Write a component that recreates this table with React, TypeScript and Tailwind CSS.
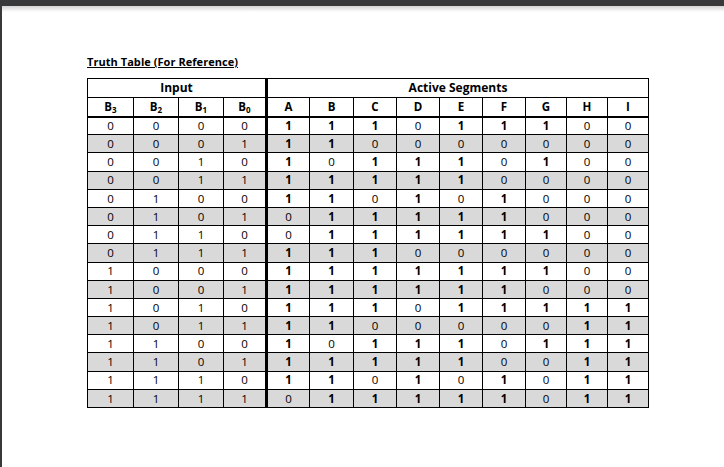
import React from "react";

const rows: number[][] = [
  [1, 1, 1, 0, 1, 1, 1, 0, 0],
  [1, 1, 0, 0, 0, 0, 0, 0, 0],
  [1, 0, 1, 1, 1, 0, 1, 0, 0],
  [1, 1, 1, 1, 1, 0, 0, 0, 0],
  [1, 1, 0, 1, 0, 1, 0, 0, 0],
  [0, 1, 1, 1, 1, 1, 0, 0, 0],
  [0, 1, 1, 1, 1, 1, 1, 0, 0],
  [1, 1, 1, 0, 0, 0, 0, 0, 0],
  [1, 1, 1, 1, 1, 1, 1, 0, 0],
  [1, 1, 1, 1, 1, 1, 0, 0, 0],
  [1, 1, 1, 0, 1, 1, 1, 1, 1],
  [1, 1, 0, 0, 0, 0, 0, 1, 1],
  [1, 0, 1, 1, 1, 0, 1, 1, 1],
  [1, 1, 1, 1, 1, 0, 0, 1, 1],
  [1, 1, 0, 1, 0, 1, 0, 1, 1],
  [0, 1, 1, 1, 1, 1, 0, 1, 1],
];

const segs = ["A", "B", "C", "D", "E", "F", "G", "H", "I"];
const inWidths = ["w-[46px]", "w-[45px]", "w-[45px]", "w-[43px]"];
const outWidths = ["w-[43px]", "w-[44px]", "w-[43px]", "w-[43px]", "w-[43px]", "w-[43px]", "w-[41px]", "w-[41px]", "w-[41px]"];

const bits = (n: number) => [3, 2, 1, 0].map((b) => (n >> b) & 1);

export default function App() {
  return (
    <div className="w-[724px] h-[467px] bg-white overflow-hidden flex flex-col font-['Open_Sans',sans-serif] text-black">
      <div className="h-[6px] bg-[#38393b] shrink-0" />
      <div className="flex flex-1">
        <div className="w-[2px] bg-[#38393b]" />
        <div className="flex-1 relative">
          {/* soft shadow under the toolbar */}
          <div className="absolute inset-x-0 top-0 h-[6px] bg-gradient-to-b from-[#d4d4d4] to-white" />
          <div className="pl-[85px] pt-[49px]">
            <h1 className="text-[11px] font-bold underline leading-[14px] tracking-[0.05px]">
              Truth Table (For Reference)
            </h1>
            <table className="mt-[9px] table-fixed border-collapse text-[11.5px] leading-none">
              <colgroup>
                {inWidths.map((w, i) => (
                  <col key={"i" + i} className={w} />
                ))}
                {outWidths.map((w, i) => (
                  <col key={"o" + i} className={w} />
                ))}
              </colgroup>
              <thead>
                <tr className="h-[19px]">
                  <th colSpan={4} className="border border-black border-r-[3px] font-bold text-[12px]">
                    Input
                  </th>
                  <th colSpan={9} className="border border-black font-bold text-[12px]">
                    Active Segments
                  </th>
                </tr>
                <tr className="h-[19px]">
                  {[3, 2, 1, 0].map((n, i) => (
                    <th
                      key={n}
                      className={`border border-black border-b-[2px] font-bold ${i === 3 ? "border-r-[3px]" : ""}`}
                    >
                      B<span className="text-[8px] relative top-[2px]">{n}</span>
                    </th>
                  ))}
                  {segs.map((s) => (
                    <th key={s} className="border border-black border-b-[2px] font-bold">
                      {s}
                    </th>
                  ))}
                </tr>
              </thead>
              <tbody>
                {rows.map((out, r) => (
                  <tr key={r} className={`h-[18.2px] ${r % 2 === 1 ? "bg-[#d9d9d9]" : "bg-white"}`}>
                    {bits(r).map((b, i) => (
                      <td
                        key={"b" + i}
                        className={`border border-black text-center ${i === 3 ? "border-r-[3px]" : ""}`}
                      >
                        {b}
                      </td>
                    ))}
                    {out.map((v, i) => (
                      <td key={"s" + i} className={`border border-black text-center ${v ? "font-bold" : ""}`}>
                        {v}
                      </td>
                    ))}
                  </tr>
                ))}
              </tbody>
            </table>
          </div>
        </div>
      </div>
    </div>
  );
}
